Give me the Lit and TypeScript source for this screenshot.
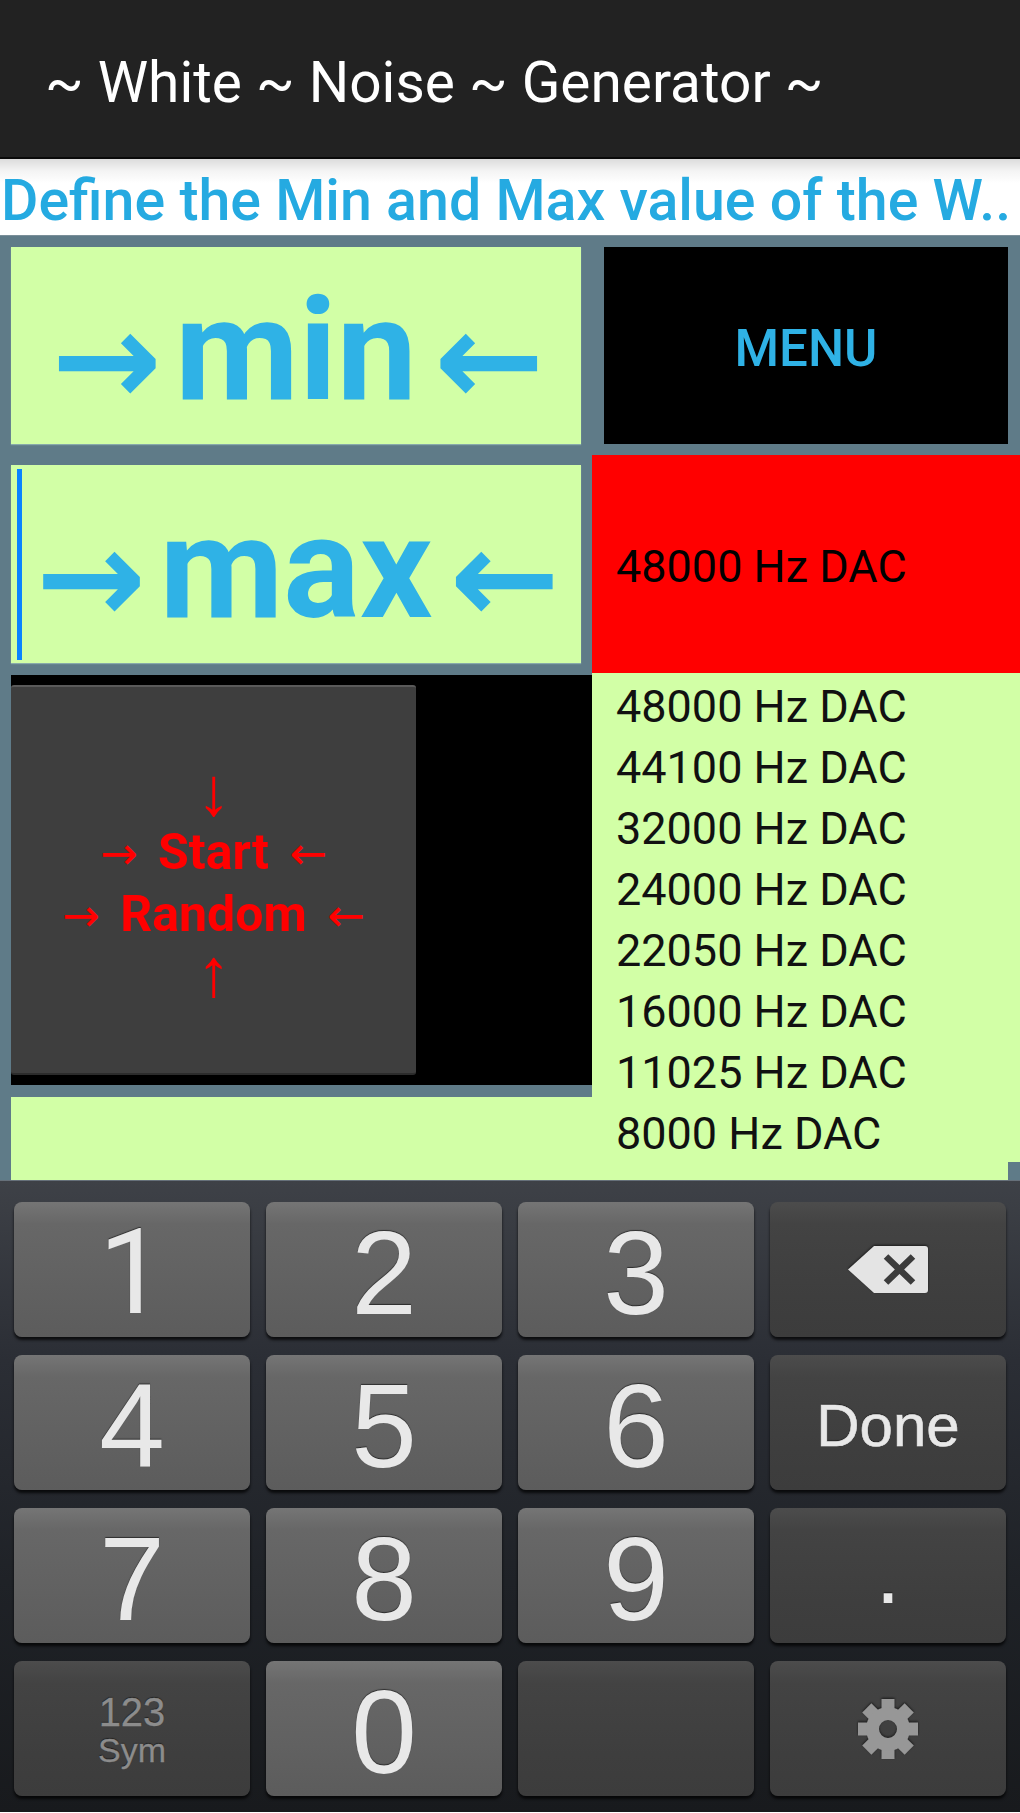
import { LitElement, html, css, svg } from "lit";
import { customElement } from "lit/decorators.js";

const RATES = ["48000", "44100", "32000", "24000", "22050", "16000", "11025", "8000"];

const gear = () => {
  const cx = 32, cy = 32;
  const teeth = Array.from({ length: 8 }, (_, i) =>
    svg`<rect x="${cx - 6.5}" y="${cy - 30}" width="13" height="16" transform="rotate(${i * 45} ${cx} ${cy})"></rect>`
  );
  return html`<svg class="gear" viewBox="0 0 64 64" width="64" height="64" fill="#979797">
    ${teeth}
    <path fill-rule="evenodd" d="M32 10a22 22 0 1 0 0 44a22 22 0 1 0 0-44zM32 23a9 9 0 1 1 0 18a9 9 0 1 1 0-18z"></path>
  </svg>`;
};

const backspace = html`<svg class="bksp" viewBox="0 0 80 47" width="80" height="47">
  <path d="M26 0H77Q80 0 80 3V44Q80 47 77 47H26L0 23.5Z" fill="#e4e4e4"></path>
  <path d="M38 10.5L65 36.5M65 10.5L38 36.5" stroke="#3c3c3c" stroke-width="6.5" fill="none"></path>
</svg>`;

@customElement("app-root")
export class AppRoot extends LitElement {
  static styles = css`
    :host { display: block; width: 1020px; height: 1813px; font-family: Roboto, sans-serif; overflow: hidden; position: relative; }
    .bar { box-sizing: border-box; background: #222; border-bottom: 2px solid #0a0a0a; display: flex; align-items: center; padding: 7px 0 0 45px; color: #fff; font-size: 56.8px; white-space: nowrap; height: 159px; }
    .sub { height: 76px; background: linear-gradient(#dcdcdc 0, #f4f4f4 12px, #fff 24px); color: #25aae1; font-size: 57.3px; font-weight: 500; line-height: 84px; padding-left: 1px; white-space: nowrap; overflow: hidden; }
    .panel { background: #5f7b88; height: 945px; box-sizing: border-box; padding: 11px 12px 0 11px; border-top: 1px solid #7a8f99; display: flex; flex-direction: column; }
    .row1 { display: flex; gap: 23px; height: 197px; }
    .field { width: 570px; height: 197px; background: #d2ffa6; box-shadow: 0 1px 1px #8aa; display: flex; align-items: center; justify-content: center; color: #2fb2e6; font-size: 143px; font-weight: 700; position: relative; box-sizing: border-box; white-space: nowrap; padding-top: 8px; }
    .menu { flex: 1; background: #000; color: #2fb2e6; font-size: 51px; font-weight: 500; display: flex; align-items: center; justify-content: center; padding-top: 6px; }
    .arrow { font-family: "DejaVu Sans", sans-serif; font-weight: 400; }
    .big { font-size: 132px; font-weight: 700; margin: 18px 13px 0; line-height: 1; }
    .big:last-child { margin: 18px 9px 0 17px; }
    .small { font-size: 45px; margin: 0 8px; }
    .tall { font-family: "Liberation Sans", sans-serif; font-weight: 700; font-size: 68px; line-height: 61px; }
    .up { margin-top: -4px; }
    .max { margin-top: 21px; height: 198px; }
    .cursor { position: absolute; left: 6px; top: 4px; width: 5px; height: 191px; background: #0a84ff; }
    .black { margin-top: 12px; width: 581px; height: 410px; box-sizing: border-box; background: #000; padding-top: 10px; }
    .start { width: 405px; height: 390px; box-sizing: border-box; background: #3e3e3e; border-top: 2px solid #5a5a5a; border-bottom: 2px solid #2c2c2c; border-radius: 3px; color: #f00; font-size: 50px; line-height: 61px; font-weight: 700; display: flex; flex-direction: column; align-items: center; justify-content: center; white-space: pre; padding-top: 4px; }
    .green { margin-top: 12px; width: 997px; height: 83px; background: #d2ffa6; }
    .drop { position: absolute; left: 592px; top: 455px; width: 428px; color: #111; font-size: 45px; }
    .sel { height: 218px; background: #f00; display: flex; align-items: center; padding: 5px 0 0 24px; box-sizing: border-box; color: #000; }
    .list { background: #d2ffa6; height: 489px; padding: 3px 0 0 24px; box-sizing: border-box; line-height: 61px; }
    .opt { height: 61px; }
    .kbd { height: 632px; box-sizing: border-box; background: linear-gradient(#3e4147 0, #2b2e35 180px, #1f2227 400px, #181a1d 100%); border-top: 1px solid #66707a; padding: 21px 14px 15px 14px; display: grid; grid-template-columns: repeat(4, 236px); grid-template-rows: repeat(4, 135px); column-gap: 16px; row-gap: 18px; font-family: "Liberation Sans", sans-serif; }
    .key { border-radius: 8px; display: flex; align-items: center; justify-content: center; color: #e8e8e8; box-shadow: 0 3px 3px rgba(0,0,0,.75); background: linear-gradient(#757575 0, #676767 22px, #606060 70%, #5c5c5c 100%); font-size: 118px; text-shadow: 0 -1px 1px rgba(0,0,0,.55); }
    .key.dark { background: linear-gradient(#4c4c4c 0, #434343 22px, #3e3e3e 70%, #3c3c3c 100%); }
    .digit { padding-top: 6px; line-height: 1; }
    .one { font-family: Roboto, sans-serif; font-weight: 400; }
    .done { font-size: 60px; padding-top: 6px; -webkit-text-stroke: .6px #e8e8e8; }
    .dot { font-size: 90px; line-height: 1; margin-top: -8px; }
    .sym { flex-direction: column; color: #8c8c8c; line-height: 1; -webkit-text-stroke: .3px #8c8c8c; padding-top: 1px; box-sizing: border-box; }
    .sym span { display: block; }
    .n { font-size: 40px; }
    .s { font-size: 34px; margin-top: 1px; }
    .gear, .bksp { display: block; filter: drop-shadow(0 -1px 1px rgba(0,0,0,.6)); }
  `;

  private key(label: unknown, cls = "") {
    return html`<div class="key ${cls}">${label}</div>`;
  }

  private digit(d: string) {
    return this.key(html`<span class="digit ${d === "1" ? "one" : ""}">${d}</span>`);
  }

  render() {
    return html`
      <div class="bar">~ White ~ Noise ~ Generator ~</div>
      <div class="sub">Define the Min and Max value of the W..</div>
      <div class="panel">
        <div class="row1">
          <div class="field"><span class="arrow big">→</span>min<span class="arrow big">←</span></div>
          <div class="menu">MENU</div>
        </div>
        <div class="field max"><div class="cursor"></div><span class="arrow big">→</span>max<span class="arrow big">←</span></div>
        <div class="black">
          <div class="start"><span class="arrow tall">↓</span><span><span class="arrow small">→</span> Start <span class="arrow small">←</span></span><span><span class="arrow small">→</span> Random <span class="arrow small">←</span></span><span class="arrow tall up">↑</span></div>
        </div>
        <div class="green"></div>
      </div>
      <div class="drop">
        <div class="sel">48000 Hz DAC</div>
        <div class="list">${RATES.map((r) => html`<div class="opt">${r} Hz DAC</div>`)}</div>
      </div>
      <div class="kbd">
        ${this.digit("1")}${this.digit("2")}${this.digit("3")}${this.key(backspace, "dark")}
        ${this.digit("4")}${this.digit("5")}${this.digit("6")}${this.key(html`<span class="done">Done</span>`, "dark")}
        ${this.digit("7")}${this.digit("8")}${this.digit("9")}${this.key(html`<span class="dot">.</span>`, "dark")}
        ${this.key(html`<span class="n">123</span><span class="s">Sym</span>`, "dark sym")}${this.digit("0")}${this.key("", "dark")}${this.key(gear(), "dark")}
      </div>
    `;
  }
}
